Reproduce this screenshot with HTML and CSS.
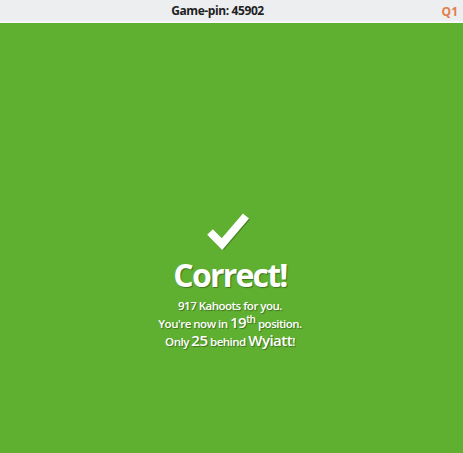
FILE: index.html
```html
<!DOCTYPE html>
<html lang="en">
<head>
    <meta charset="UTF-8">
    <meta name="viewport" content="width=device-width, initial-scale=1.0">
    <title>Kahoot!</title>
    <link rel="stylesheet" href="styles.css">
</head>
<body>

    <!-- Top bar -->
    <header class="top-bar">
        <span class="game-pin">Game-pin: 45902</span>
        <span class="question-no">Q1</span>
    </header>

    <!-- Answer result -->
    <main class="result">
        <div class="result-box">
            <svg class="check" width="46" height="42" viewBox="0 0 46 42">
                <polyline points="5,24 17,36 41,8" fill="none" stroke="#000" stroke-opacity="0.25" stroke-width="8" transform="translate(1,1)"/>
                <polyline points="5,24 17,36 41,8" fill="none" stroke="#fff" stroke-width="8"/>
            </svg>
            <h1 class="result-title">Correct!</h1>
            <p class="result-line">917 Kahoots for you.</p>
            <p class="result-line">You're now in <span class="big">19<sup>th</sup></span> position.</p>
            <p class="result-line">Only <span class="big">25</span> behind <span class="big">Wyiatt</span>!</p>
        </div>
    </main>

</body>
</html>
```

FILE: styles.css
```css
/* Base */
* {
    margin: 0;
    padding: 0;
    box-sizing: border-box;
}

body {
    font-family: "Open Sans", Arial, sans-serif;
    height: 453px;
    display: flex;
    flex-direction: column;
    background-color: #5fb030;
}

/* Top bar */
.top-bar {
    height: 23px;
    background-color: #eceef0;
    border-bottom: 2px solid #f6f7f7;
    display: flex;
    align-items: center;
    justify-content: center;
    position: relative;
    padding-right: 28px;
}

.game-pin {
    font-size: 12px;
    font-weight: bold;
    letter-spacing: -0.4px;
    color: #222;
}

.question-no {
    position: absolute;
    right: 5px;
    top: 3px;
    font-size: 12px;
    font-weight: bold;
    color: #e0804a;
}

/* Result */
.result {
    flex: 1;
    display: flex;
    justify-content: center;
    padding-top: 187px;
    padding-right: 3px;
}

.result-box {
    display: flex;
    flex-direction: column;
    align-items: center;
    color: #fff;
    text-shadow: 1px 1px 1px rgba(0, 0, 0, 0.35);
}

.check {
    margin-right: 3px;
    margin-top: -2px;
}

.result-title {
    font-size: 32px;
    line-height: 40px;
    font-weight: bold;
    letter-spacing: -1.8px;
    margin-top: 5px;
    margin-bottom: 2px;
}

.result-line {
    font-size: 11.5px;
    line-height: 18px;
    font-weight: 600;
    letter-spacing: -0.5px;
}

.big {
    font-size: 15px;
    line-height: 1;
}

.big sup {
    font-size: 10px;
    vertical-align: 5px;
    line-height: 0;
}
```
